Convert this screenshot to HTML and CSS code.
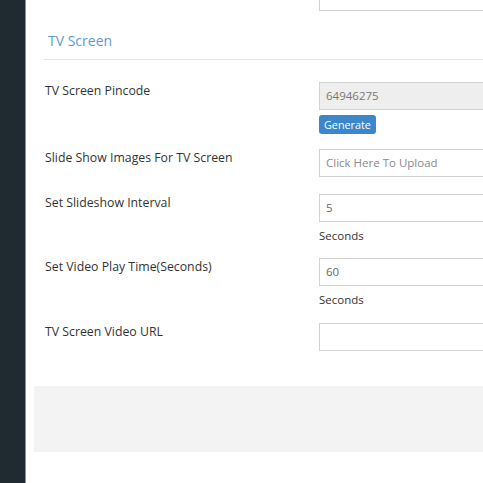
FILE: index.html
```html
<!DOCTYPE html>
<html>
<head>
<meta charset="utf-8">
<link rel="stylesheet" href="styles.css">
</head>
<body>
<div class="app">
  <aside class="sidebar"></aside>
  <main class="main">
    <div class="top-row"><div class="control"><div class="input top-input"></div></div></div>
    <section class="panel">
      <h3 class="panel-title">TV Screen</h3>
      <div class="form">
        <div class="row">
          <label class="label">TV Screen Pincode</label>
          <div class="control">
            <div class="input disabled">64946275</div>
            <button class="btn">Generate</button>
          </div>
        </div>
        <div class="row row-upload">
          <label class="label">Slide Show Images For TV Screen</label>
          <div class="control">
            <div class="input placeholder">Click Here To Upload</div>
          </div>
        </div>
        <div class="row row-help">
          <label class="label">Set Slideshow Interval</label>
          <div class="control">
            <div class="input value">5</div>
            <div class="help">Seconds</div>
          </div>
        </div>
        <div class="row row-help">
          <label class="label">Set Video Play Time(Seconds)</label>
          <div class="control">
            <div class="input value">60</div>
            <div class="help">Seconds</div>
          </div>
        </div>
        <div class="row">
          <label class="label">TV Screen Video URL</label>
          <div class="control">
            <div class="input"></div>
          </div>
        </div>
      </div>
    </section>
    <div class="footer"></div>
  </main>
</div>
</body>
</html>
```

FILE: styles.css
```css
html, body {
  margin: 0;
  padding: 0;
  background: #fff;
  overflow: hidden;
}
body {
  font-family: "Open Sans", "Liberation Sans", sans-serif;
  font-size: 12.3px;
  color: #333;
  width: 483px;
  height: 483px;
}
.app {
  display: flex;
  height: 483px;
}
.sidebar {
  width: 25px;
  flex: none;
  background: #1f2a31;
  border-right: 1px solid #8a9094;
}
.main {
  flex: 1;
  min-width: 0;
  display: flex;
  flex-direction: column;
}
.top-row {
  display: flex;
  padding-left: 293px;
  margin-top: -20px;
}
.control {
  width: 300px;
  flex: none;
}
.input {
  box-sizing: border-box;
  height: 28px;
  border: 1px solid #d2d2d2;
  background: #fff;
  padding: 0 6px;
  line-height: 26px;
  font-size: 11.5px;
  color: #555;
  width: 300px;
}
.top-input {
  height: 31px;
}
.panel {
  margin-left: 18px;
  padding-top: 20px;
}
.panel-title {
  margin: 0;
  font-weight: normal;
  font-size: 14px;
  color: #5b9ad6;
  padding-left: 4px;
  line-height: 20px;
  padding-bottom: 8px;
  border-bottom: 1px solid #dfe5ea;
}
.form {
  padding-top: 22px;
  padding-left: 1px;
}
.row {
  display: flex;
  margin-bottom: 15px;
}
.row-upload {
  margin-bottom: 17px;
}
.row-help {
  margin-bottom: 13px;
}
.row-help + .row-help {
  margin-bottom: 14px;
}
.label {
  width: 274px;
  flex: none;
  line-height: 18px;
  padding-top: 0;
}
.input.disabled {
  background: #eeeeee;
  color: #777;
}
.input.placeholder {
  color: #8a8a8a;
}
.input.value {
  color: #666;
}
.btn {
  display: block;
  margin-top: 5px;
  height: 19px;
  padding: 0 5px;
  border: none;
  border-radius: 3px;
  background: #3b87cc;
  color: #fff;
  font-family: "Open Sans", "Liberation Sans", sans-serif;
  font-size: 10.8px;
  line-height: 19px;
}
.help {
  margin-top: 5px;
  line-height: 18px;
  font-size: 11.5px;
  color: #333;
}
.footer {
  margin-top: 20px;
  margin-left: 8px;
  height: 66px;
  background: #f3f3f3;
}
```
